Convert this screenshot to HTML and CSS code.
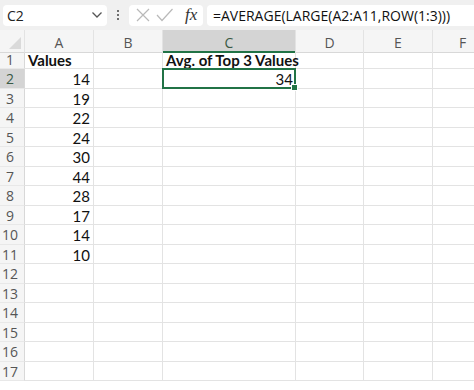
FILE: index.html
```
<!DOCTYPE html>
<html lang="en">
<head>
  <meta charset="UTF-8">
  <title>AVERAGE of top 3</title>
  <link rel="stylesheet" href="styles.css">
</head>
<body>

  <div class="toolbar">
    <div class="namebox">
      <span>C2</span>
      <svg width="12" height="8" viewBox="0 0 12 8"><path d="M1.5 1.5 L6 6 L10.5 1.5" fill="none" stroke="#555" stroke-width="1.3"/></svg>
    </div>
    <div class="dots"><i></i><i></i><i></i></div>
    <div class="fxbox">
      <svg width="16" height="16" viewBox="0 0 16 16"><path d="M2 2 L14 14 M14 2 L2 14" stroke="#b9b9b9" stroke-width="1.2"/></svg>
      <svg width="20" height="16" viewBox="0 0 20 16"><path d="M2 8 L7 13.5 L17.5 2" fill="none" stroke="#b9b9b9" stroke-width="1.2"/></svg>
      <span class="fx">fx</span>
    </div>
    <div class="formula">=AVERAGE(LARGE(A2:A11,ROW(1:3)))</div>
  </div>

  <div class="sheet">
    <div class="hd corner"></div>
    <div class="hd">A</div>
    <div class="hd">B</div>
    <div class="hd active">C</div>
    <div class="hd">D</div>
    <div class="hd">E</div>
    <div class="hd">F</div>
  </div>

  <div class="sheet" id="rows"></div>

  <script>
    const values = [14, 19, 22, 24, 30, 44, 28, 17, 14, 10];
    const rows = document.getElementById('rows');

    function cell(text, cls) {
      const d = document.createElement('div');
      d.className = cls;
      d.textContent = text;
      rows.appendChild(d);
    }

    for (let r = 1; r <= 17; r++) {
      cell(r, r === 2 ? 'rh active' : 'rh');
      if (r === 1) {
        cell('Values', 'c bold');
        cell('', 'c');
        cell('Avg. of Top 3 Values', 'c bold');
      } else {
        cell(r <= 11 ? values[r - 2] : '', 'c num');
        cell('', 'c');
        cell(r === 2 ? 34 : '', r === 2 ? 'c num sel' : 'c');
      }
      cell('', 'c');
      cell('', 'c');
      cell('', 'c');
    }
  </script>

</body>
</html>
```
FILE: styles.css
```
* {
  margin: 0;
  padding: 0;
  box-sizing: border-box;
}

body {
  font-family: "Open Sans", "Noto Sans", sans-serif;
  background: #fff;
  width: 474px;
  height: 390px;
  overflow: hidden;
}

.toolbar {
  display: flex;
  align-items: center;
  height: 30px;
  padding: 0 0 0 3px;
  background: #f0f0f0;
}

.namebox,
.fxbox,
.formula {
  background: #fff;
  height: 21px;
  border-radius: 4px;
  display: flex;
  align-items: center;
}

.namebox {
  width: 104px;
  justify-content: space-between;
  padding: 0 4px 0 4px;
  font-size: 14px;
  color: #222;
}

.dots {
  width: 22px;
  display: flex;
  flex-direction: column;
  align-items: center;
  gap: 2px;
}

.dots i {
  width: 2px;
  height: 2px;
  background: #444;
  border-radius: 1px;
}

.fxbox {
  width: 74px;
  padding: 0 4px 0 6px;
  gap: 4px;
}

.fx {
  font-family: "Liberation Serif", serif;
  font-style: italic;
  font-size: 17px;
  color: #333;
  margin-left: 6px;
}

.formula {
  flex: 1;
  margin-left: 4px;
  padding-left: 6px;
  font-size: 14px;
  color: #111;
  border-radius: 4px 0 0 4px;
}

.sheet {
  display: grid;
  grid-template-columns: 25px 69px 69px 133px 68px 69px 60px;
  grid-auto-rows: 19.5px;
}

.hd {
  height: 23px;
  background: #f5f5f5;
  border-right: 1px solid #e3e3e3;
  border-bottom: 1px solid #d8d8d8;
  font-size: 14px;
  color: #555;
  text-align: center;
  line-height: 19px;
  padding-top: 3px;
}

.hd.active {
  background: #d4d4d4;
  border-bottom: 2px solid #217346;
  color: #3a5a45;
}

.corner {
  position: relative;
}

.corner::after {
  content: "";
  position: absolute;
  right: 3px;
  bottom: 3px;
  border-left: 12px solid transparent;
  border-bottom: 12px solid #dadada;
}

.rh {
  background: #f5f5f5;
  border-right: 1px solid #d8d8d8;
  border-bottom: 1px solid #e8e8e8;
  font-size: 14px;
  color: #555;
  text-align: center;
  padding-right: 4px;
  line-height: 19px;
}

.rh.active {
  background: #d4d4d4;
  color: #3a5a45;
}

.c {
  border-right: 1px solid #e3e3e3;
  border-bottom: 1px solid #e3e3e3;
  font-family: Lato, "Liberation Sans", sans-serif;
  font-size: 15px;
  color: #111;
  line-height: 18px;
  padding: 1px 3px 0;
  white-space: nowrap;
}

.bold {
  font-weight: bold;
}

.num {
  text-align: right;
}

.sel {
  position: relative;
  border: 2px solid #217346;
  margin: -1px 0 0 -1px;
  width: calc(100% + 1px);
  height: calc(100% + 1px);
  line-height: 16px;
  padding-right: 1px;
}

.sel::after {
  content: "";
  position: absolute;
  right: -4px;
  bottom: -4px;
  width: 5px;
  height: 5px;
  background: #217346;
  border: 1px solid #fff;
}
```
